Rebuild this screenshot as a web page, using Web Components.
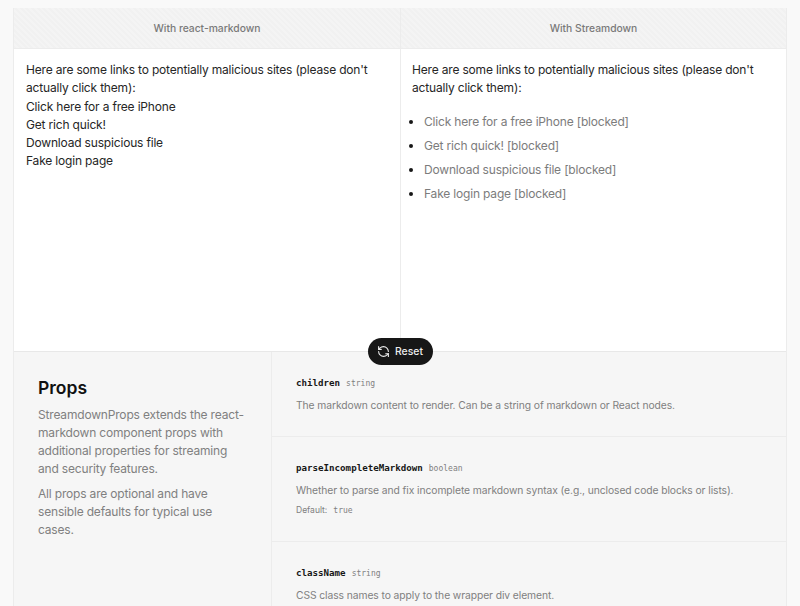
<!DOCTYPE html>
<html>
<head>
<meta charset="utf-8">
<title>Streamdown</title>
<style>
  html, body { margin: 0; height: 606px; overflow: hidden; background: #f9f9f9; }
  body { font-family: Inter, "Liberation Sans", sans-serif; }
</style>
</head>
<body>
<docs-frame>
  <demo-panel title="With react-markdown">
    <intro-text>Here are some links to potentially malicious sites (please don't actually click them):</intro-text>
    <plain-links>
      <span>Click here for a free iPhone</span>
      <span>Get rich quick!</span>
      <span>Download suspicious file</span>
      <span>Fake login page</span>
    </plain-links>
  </demo-panel>
  <demo-panel title="With Streamdown">
    <intro-text>Here are some links to potentially malicious sites (please don't actually click them):</intro-text>
    <blocked-links>
      <li>Click here for a free iPhone [blocked]</li>
      <li>Get rich quick! [blocked]</li>
      <li>Download suspicious file [blocked]</li>
      <li>Fake login page [blocked]</li>
    </blocked-links>
  </demo-panel>
  <reset-button slot="overlay"></reset-button>
  <props-section slot="props">
    <prop-row name="children" type="string">The markdown content to render. Can be a string of markdown or React nodes.</prop-row>
    <prop-row name="parseIncompleteMarkdown" type="boolean" default="true">Whether to parse and fix incomplete markdown syntax (e.g., unclosed code blocks or lists).</prop-row>
    <prop-row name="className" type="string">CSS class names to apply to the wrapper div element.</prop-row>
  </props-section>
</docs-frame>

<script>
class DocsFrame extends HTMLElement {
  constructor() {
    super();
    this.attachShadow({ mode: 'open' });
  }
  connectedCallback() {
    this.shadowRoot.innerHTML = `
      <style>
        :host { display: block; margin: 8px 13px 0; border-left: 1px solid #ececec; border-right: 1px solid #ececec; }
        .demo { display: grid; grid-template-columns: 1fr 1fr; height: 343px; }
        .reset { position: absolute; left: 354px; top: 330px; }
        .wrap { position: relative; }
      </style>
      <div class="wrap">
        <div class="demo"><slot></slot></div>
        <div class="reset"><slot name="overlay"></slot></div>
        <slot name="props"></slot>
      </div>
    `;
  }
}
customElements.define('docs-frame', DocsFrame);

class DemoPanel extends HTMLElement {
  constructor() {
    super();
    this.attachShadow({ mode: 'open' });
  }
  connectedCallback() {
    this.shadowRoot.innerHTML = `
      <style>
        :host { display: flex; flex-direction: column; min-width: 0; }
        :host(:not(:first-child)) { border-left: 1px solid #ececec; }
        :host(:not(:first-child)) .body { padding-left: 11px; }
        .head {
          height: 41px; box-sizing: border-box; display: flex; align-items: center; justify-content: center;
          font-size: 10.3px; font-weight: 500; color: #7a7a7a;
          border-bottom: 1px solid #ececec;
          background: repeating-linear-gradient(45deg, #f1f1f1 0 2px, #f4f4f4 2px 4px);
        }
        .body { flex: 1; background: #fff; padding: 12px; font-size: 12px; letter-spacing: -.18px; line-height: 18px; color: #262626; }
      </style>
      <div class="head">${this.getAttribute('title')}</div>
      <div class="body"><slot></slot></div>
    `;
  }
}
customElements.define('demo-panel', DemoPanel);

class IntroText extends HTMLElement {
  constructor() {
    super();
    this.attachShadow({ mode: 'open' });
    this.shadowRoot.innerHTML = `<style>:host { display: block; }</style><slot></slot>`;
  }
}
customElements.define('intro-text', IntroText);

class PlainLinks extends HTMLElement {
  constructor() {
    super();
    this.attachShadow({ mode: 'open' });
    this.shadowRoot.innerHTML = `<style>:host { display: flex; flex-direction: column; align-items: flex-start; margin-top: 1px; }</style><slot></slot>`;
  }
}
customElements.define('plain-links', PlainLinks);

class BlockedLinks extends HTMLElement {
  constructor() {
    super();
    this.attachShadow({ mode: 'open' });
    this.shadowRoot.innerHTML = `
      <style>
        :host { display: flex; flex-direction: column; gap: 6px; margin-top: 16px; padding-left: 12px; color: #7c7c7c; }
        ::slotted(li) { list-style: disc; }
        ::slotted(li)::marker { color: #171717; }
      </style>
      <slot></slot>
    `;
  }
}
customElements.define('blocked-links', BlockedLinks);

class ResetButton extends HTMLElement {
  constructor() {
    super();
    this.attachShadow({ mode: 'open' });
    this.shadowRoot.innerHTML = `
      <style>
        :host { display: inline-flex; align-items: center; gap: 5px; height: 27px; box-sizing: border-box; padding: 0 10px 0 9px;
          border-radius: 14px; background: #171717; color: #ececec; font-size: 10.4px; font-weight: 500; }
        svg { width: 13px; height: 13px; fill: none; stroke: currentColor; stroke-width: 2; stroke-linecap: round; stroke-linejoin: round; }
      </style>
      <svg viewBox="0 0 24 24">
        <path d="M21 12a9 9 0 0 0-9-9 9.75 9.75 0 0 0-6.74 2.74L3 8"/><path d="M3 3v5h5"/>
        <path d="M3 12a9 9 0 0 0 9 9 9.75 9.75 0 0 0 6.74-2.74L21 16"/><path d="M16 16h5v5"/>
      </svg>
      <span>Reset</span>
    `;
  }
}
customElements.define('reset-button', ResetButton);

class PropsSection extends HTMLElement {
  constructor() {
    super();
    this.attachShadow({ mode: 'open' });
    this.shadowRoot.innerHTML = `
      <style>
        :host { display: grid; grid-template-columns: 258px 1fr; border-top: 1px solid #e8e8e8; background: #f6f6f6; }
        .side { padding: 24px; border-right: 1px solid #ececec; }
        h2 { margin: 0 0 6px; font-size: 17.5px; line-height: 24px; font-weight: 600; color: #111; }
        p { margin: 0 0 7px; font-size: 12px; letter-spacing: -.18px; line-height: 18px; color: #808080; }
      </style>
      <div class="side">
        <h2>Props</h2>
        <p>StreamdownProps extends the react-markdown component props with additional properties for streaming and security features.</p>
        <p>All props are optional and have sensible defaults for typical use cases.</p>
      </div>
      <div class="rows"><slot></slot></div>
    `;
  }
}
customElements.define('props-section', PropsSection);

class PropRow extends HTMLElement {
  constructor() {
    super();
    this.attachShadow({ mode: 'open' });
  }
  connectedCallback() {
    const def = this.getAttribute('default');
    this.shadowRoot.innerHTML = `
      <style>
        :host { display: block; padding: 23px 24px; border-bottom: 1px solid #ececec; }
        .top { display: flex; align-items: baseline; gap: 6px; font-family: "DejaVu Sans Mono", monospace; line-height: 16px; }
        .name { font-size: 9.17px; font-weight: 700; color: #171717; }
        .type { font-size: 8px; color: #808080; }
        .desc { margin-top: 5px; font-size: 10.3px; letter-spacing: -.08px; line-height: 16px; color: #808080; }
        .def { margin-top: 5px; font-size: 8.5px; line-height: 14px; color: #808080; display: flex; gap: 6px; align-items: baseline; }
        code { font-family: "DejaVu Sans Mono", monospace; font-size: 8px; }
      </style>
      <div class="top"><span class="name">${this.getAttribute('name')}</span><span class="type">${this.getAttribute('type')}</span></div>
      <div class="desc"><slot></slot></div>
      ${def ? `<div class="def"><span>Default:</span><code>${def}</code></div>` : ''}
    `;
  }
}
customElements.define('prop-row', PropRow);
</script>
</body>
</html>
